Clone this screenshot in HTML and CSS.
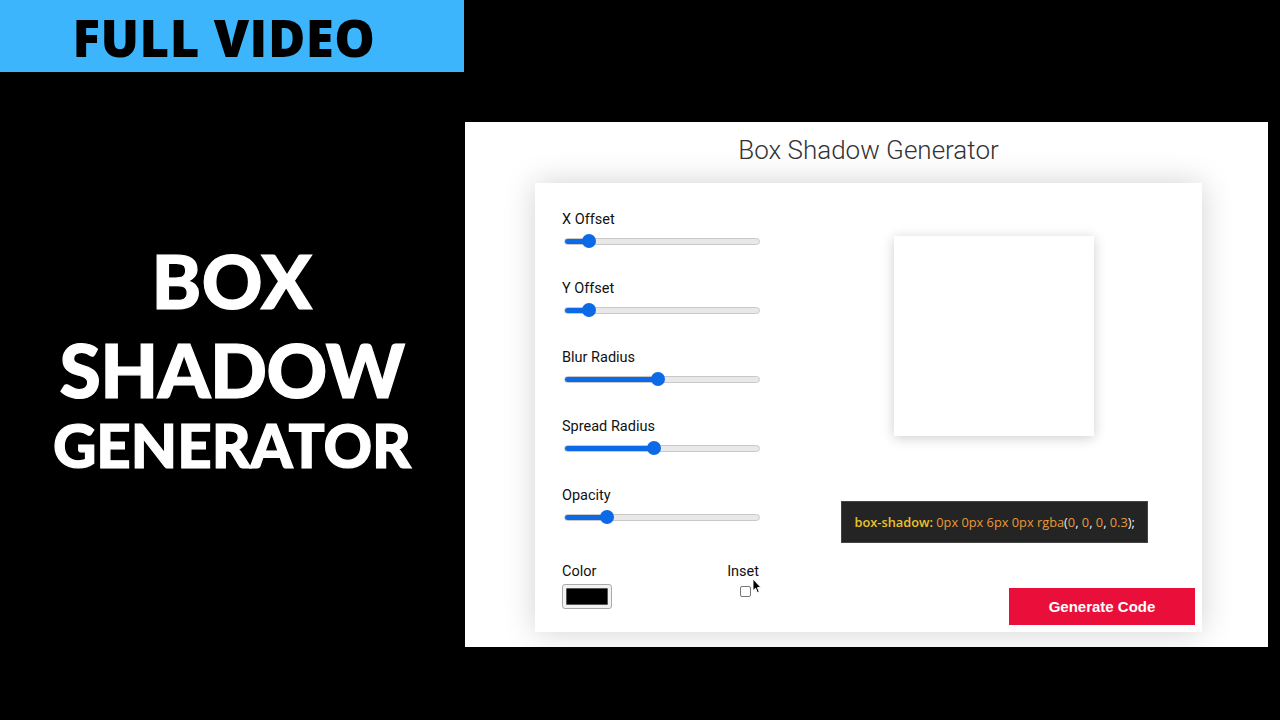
FILE: index.html
```html
<!DOCTYPE html>
<html>
<head>
<meta charset="utf-8">
<link rel="stylesheet" href="styles.css">
</head>
<body>
<div class="page">
  <div class="left">
    <div class="banner">FULL VIDEO</div>
    <div class="headline">
      <div class="h-box">BOX</div>
      <div class="h-shadow">SHADOW</div>
      <div class="h-gen">GENERATOR</div>
    </div>
  </div>
  <div class="right">
    <div class="screen">
      <h1 class="title">Box Shadow Generator</h1>
      <div class="card">
        <div class="controls">
          <div class="field">
            <label class="lbl">X Offset</label>
            <input class="range" type="range" min="0" max="1000" value="93" style="--p:9.3%">
          </div>
          <div class="field">
            <label class="lbl">Y Offset</label>
            <input class="range" type="range" min="0" max="1000" value="93" style="--p:9.3%">
          </div>
          <div class="field">
            <label class="lbl">Blur Radius</label>
            <input class="range" type="range" min="0" max="1000" value="478" style="--p:47.8%">
          </div>
          <div class="field">
            <label class="lbl">Spread Radius</label>
            <input class="range" type="range" min="0" max="1000" value="456" style="--p:45.6%">
          </div>
          <div class="field">
            <label class="lbl">Opacity</label>
            <input class="range" type="range" min="0" max="1000" value="192" style="--p:19.2%">
          </div>
          <div class="bottom-row">
            <div class="color-field">
              <label class="lbl">Color</label>
              <input class="color" type="color" value="#000000">
            </div>
            <div class="inset-field">
              <label class="lbl">Inset</label>
              <input class="check" type="checkbox">
              <svg class="cursor" width="10" height="16" viewBox="0 0 10 16"><path d="M1 1 L1 12.5 L3.6 10.2 L5.4 14.6 L7.2 13.8 L5.4 9.6 L8.8 9.4 Z" fill="#000" stroke="#fff" stroke-width="0.9" stroke-linejoin="round"/></svg>
            </div>
          </div>
        </div>
        <div class="output">
          <div class="preview"></div>
          <div class="code"><span class="code-line"><span class="prop">box-shadow:</span> <span class="val">0px 0px 6px 0px rgba</span><span class="pun">(</span><span class="val">0</span><span class="pun">, </span><span class="val">0</span><span class="pun">, </span><span class="val">0</span><span class="pun">, </span><span class="val">0.3</span><span class="pun">);</span></span></div>
          <div class="btn-row"><button class="btn">Generate Code</button></div>
        </div>
      </div>
    </div>
  </div>
</div>
</body>
</html>
```
FILE: styles.css
```css
* { box-sizing: border-box; }
html, body { margin: 0; padding: 0; }
body { background: #000; width: 1280px; height: 720px; overflow: hidden; }
.page { display: flex; width: 1280px; height: 720px; }
.left { width: 465px; display: flex; flex-direction: column; }
.banner {
  width: 464px; height: 72px; background: #3cb5fd; color: #000;
  font-family: "Open Sans", sans-serif; font-weight: 800; font-size: 51px;
  display: flex; align-items: center; justify-content: center;
  padding-right: 16px; padding-top: 2px; letter-spacing: 0.5px;
}
.headline {
  color: #fff; font-family: Lato, "Open Sans", sans-serif; font-weight: 900;
  text-align: center; padding-top: 164px; padding-right: 1px;
  -webkit-text-stroke: 1.2px #fff;
}
.h-box { font-size: 75px; line-height: 89px; letter-spacing: 0.5px; }
.h-shadow { font-size: 75px; line-height: 89px; letter-spacing: -0.5px; }
.h-gen { font-size: 60px; line-height: 75px; letter-spacing: 0px; margin-top: -6px; }

.right { padding-top: 122px; }
.screen {
  width: 803px; height: 525px; background: #fff;
  display: flex; flex-direction: column; align-items: flex-start;
}
.title {
  margin: 0; width: 100%; text-align: center; padding-left: 4px;
  font-family: Roboto, sans-serif; font-weight: 300; font-size: 26px;
  color: #333; line-height: 32px; padding-top: 12px; height: 61px;
}
.card {
  margin-left: 70px; width: 667px; height: 449px; background: #fff;
  box-shadow: 0 0 30px rgba(0,0,0,0.18);
  display: flex;
}
.controls { width: 251px; padding: 28px 0 0 27px; display: flex; flex-direction: column; }
.field { display: flex; flex-direction: column; height: 69px; }
.lbl {
  font-family: Roboto, "Liberation Sans", sans-serif; font-size: 14.5px; color: #111;
  line-height: 18px; display: block;
}
.range {
  -webkit-appearance: none; appearance: none; margin: 5px 0 0 2px; width: 196px; height: 14px;
  background: transparent; padding: 0;
}
.range::-webkit-slider-runnable-track {
  height: 7px; border-radius: 4px; border: 1px solid #c9c9c9;
  background: linear-gradient(to right, #0c6ae6 0, #0c6ae6 calc(7px + (100% - 14px) * var(--p) / 100%), #e8e8e8 0);
}
.range::-webkit-slider-thumb {
  -webkit-appearance: none; appearance: none; width: 14px; height: 14px; border-radius: 50%;
  background: #0c6ae6; border: none; margin-top: -4.5px;
}
.bottom-row { display: flex; justify-content: space-between; width: 198px; margin-top: 7px; }
.color-field { display: flex; flex-direction: column; }
.color {
  -webkit-appearance: none; appearance: none; margin: 3px 0 0 0; width: 50px; height: 25px;
  border: 1px solid #aaa; border-radius: 3px; background: #f2f2f2; padding: 3px; cursor: pointer;
}
.color::-webkit-color-swatch-wrapper { padding: 0; }
.color::-webkit-color-swatch { border: 1px solid #555; border-radius: 1px; }
.inset-field { display: flex; flex-direction: column; align-items: center; position: relative; margin-right: 1px; }
.check {
  -webkit-appearance: none; appearance: none; width: 11px; height: 11px; margin: 5px 0 0 5px;
  border: 1px solid #777; border-radius: 2px; background: #fff;
}
.cursor { position: absolute; left: 25px; top: 15px; }

.output { flex: 1; display: flex; flex-direction: column; align-items: center; }
.preview {
  margin-top: 53px; width: 200px; height: 200px; background: #fff;
  box-shadow: 0 2px 12px rgba(0,0,0,0.2);
}
.code {
  margin-top: 65px; width: 307px; height: 42px; background: #242424; border: 1px solid #444;
  font-family: "Open Sans", sans-serif; font-size: 12.8px; font-weight: 500;
  display: flex; align-items: center; padding-left: 13px;
}
.code-line { white-space: pre; }
.prop { color: #e9c22a; font-weight: 600; }
.val { color: #e8993a; }
.pun { color: #f0f0f0; }
.btn-row { width: 100%; display: flex; justify-content: flex-end; padding-right: 7px; margin-top: 45px; }
.btn {
  width: 186px; height: 37px; border: none; background: #ea0f3a; color: #fff;
  font-family: "Liberation Sans", Arial, sans-serif; font-weight: bold; font-size: 15px;
}
```
